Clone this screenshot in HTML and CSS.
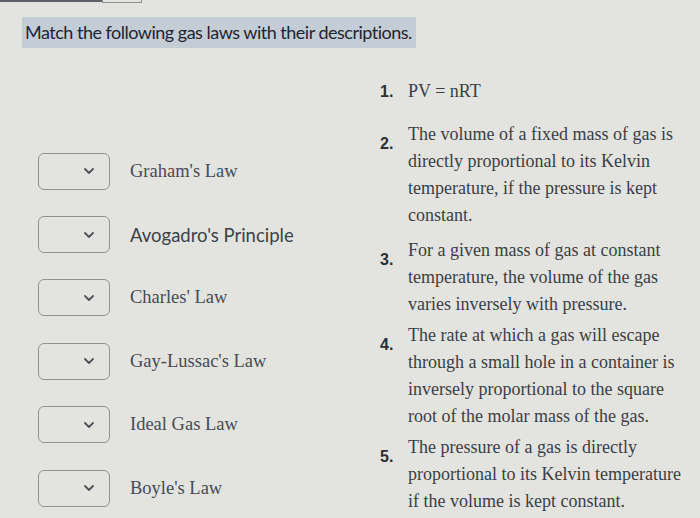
FILE: index.html
```html
<!DOCTYPE html>
<html lang="en">
<head>
    <meta charset="UTF-8">
    <meta name="viewport" content="width=device-width, initial-scale=1.0">
    <title>Gas Laws Matching</title>
    <link rel="stylesheet" href="styles.css">
</head>
<body>
    <div class="topbar">
        <span class="tab"></span>
        <span class="tab tab-open"></span>
    </div>

    <h1 class="prompt"><span class="highlight">Match the following gas laws with their descriptions.</span></h1>

    <div class="match">
        <div class="choices">
            <div class="choice">
                <div class="select"><svg width="10" height="6" viewBox="0 0 10 6"><path d="M1 1l4 4 4-4" /></svg></div>
                <span class="label">Graham's Law</span>
            </div>
            <div class="choice">
                <div class="select"><svg width="10" height="6" viewBox="0 0 10 6"><path d="M1 1l4 4 4-4" /></svg></div>
                <span class="label label-sans">Avogadro's Principle</span>
            </div>
            <div class="choice">
                <div class="select"><svg width="10" height="6" viewBox="0 0 10 6"><path d="M1 1l4 4 4-4" /></svg></div>
                <span class="label">Charles' Law</span>
            </div>
            <div class="choice">
                <div class="select"><svg width="10" height="6" viewBox="0 0 10 6"><path d="M1 1l4 4 4-4" /></svg></div>
                <span class="label">Gay-Lussac's Law</span>
            </div>
            <div class="choice">
                <div class="select"><svg width="10" height="6" viewBox="0 0 10 6"><path d="M1 1l4 4 4-4" /></svg></div>
                <span class="label">Ideal Gas Law</span>
            </div>
            <div class="choice">
                <div class="select"><svg width="10" height="6" viewBox="0 0 10 6"><path d="M1 1l4 4 4-4" /></svg></div>
                <span class="label">Boyle's Law</span>
            </div>
        </div>

        <ol class="answers">
            <li class="answer answer-first">
                <span class="num">1.</span>
                <p>PV = nRT</p>
            </li>
            <li class="answer answer-long">
                <span class="num">2.</span>
                <p>The volume of a fixed mass of gas is directly proportional to its Kelvin temperature, if the pressure is kept constant.</p>
            </li>
            <li class="answer">
                <span class="num">3.</span>
                <p>For a given mass of gas at constant temperature, the volume of the gas varies inversely with pressure.</p>
            </li>
            <li class="answer">
                <span class="num">4.</span>
                <p>The rate at which a gas will escape through a small hole in a container is inversely proportional to the square root of the molar mass of the gas.</p>
            </li>
            <li class="answer">
                <span class="num">5.</span>
                <p>The pressure of a gas is directly proportional to its Kelvin temperature if the volume is kept constant.</p>
            </li>
        </ol>
    </div>
</body>
</html>
```

FILE: styles.css
```css
body {
    margin: 0;
    background: #e3e4df;
    color: #3b3e46;
    font-family: 'Liberation Serif', serif;
    height: 518px;
    overflow: hidden;
}

/* thin tab strip along the top edge */
.topbar {
    display: flex;
    height: 3px;
}
.tab {
    width: 102px;
    height: 2px;
    background: #5a5f66;
}
.tab-open {
    width: 38px;
    height: 2px;
    background: transparent;
    border: 1px solid #8a8f95;
    border-top: none;
}

.prompt {
    margin: 14px 0 0 22px;
    font-family: 'Lato', sans-serif;
    font-weight: 400;
    font-size: 18px;
    letter-spacing: -0.5px;
    line-height: 31px;
    color: #1e2530;
}
.highlight {
    display: inline-block;
    background: #c4ccd6;
    padding: 0 4px 0 3px;
}

.match {
    display: flex;
    margin-top: 29.5px;
}

/* left column: dropdowns with law names */
.choices {
    width: 380px;
    padding-top: 62px;
    flex-shrink: 0;
}
.choice {
    display: flex;
    align-items: center;
    height: 63.4px;
    padding-left: 38px;
    gap: 20px;
}
.select {
    width: 72px;
    height: 37px;
    box-sizing: border-box;
    border: 1.5px solid #8f9398;
    border-radius: 6px;
    display: flex;
    align-items: center;
    padding-left: 45px;
}
.select svg path {
    fill: none;
    stroke: #4f545b;
    stroke-width: 1.8;
    stroke-linecap: round;
    stroke-linejoin: round;
}
.label {
    font-size: 18.5px;
    color: #474b54;
}
.label-sans {
    font-family: 'Lato', sans-serif;
    font-size: 18.5px;
    color: #3c414a;
}

/* right column: numbered descriptions */
.answers {
    list-style: none;
    margin: 0;
    padding: 0;
    width: 310px;
}
.answer {
    display: flex;
    margin-bottom: 4px;
}
.answer-first {
    margin-bottom: 16.5px;
}
.answer-long {
    margin-bottom: 8px;
}
.num {
    width: 28px;
    flex-shrink: 0;
    font-family: 'Liberation Sans', sans-serif;
    font-size: 16px;
    font-weight: 700;
    color: #2c3036;
    line-height: 27px;
    margin-top: 9px;
}
.answer-first .num {
    margin-top: 0;
}
.answer p {
    margin: 0;
    width: 275px;
    font-size: 18px;
    line-height: 27px;
}
```
